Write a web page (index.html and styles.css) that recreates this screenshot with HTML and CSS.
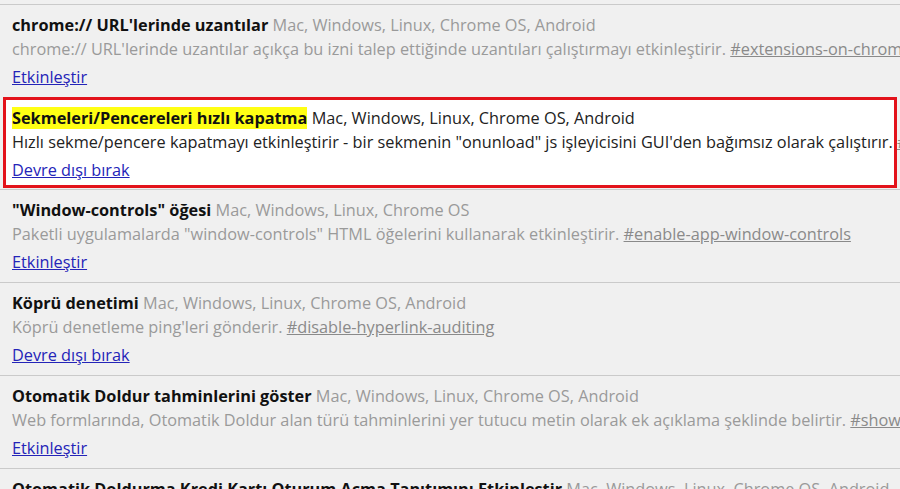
FILE: index.html
```html
<!DOCTYPE html>
<html lang="tr">
<head>
<meta charset="utf-8">
<link rel="stylesheet" href="styles.css">
</head>
<body>
<div class="list">
  <div class="item">
    <div class="line"><span class="title">chrome:// URL'lerinde uzantılar</span> <span class="platforms">Mac, Windows, Linux, Chrome OS, Android</span></div>
    <div class="line desc">chrome:// URL'lerinde uzantılar açıkça bu izni talep ettiğinde uzantıları çalıştırmayı etkinleştirir. <a class="perma" href="#">#extensions-on-chrome-urls</a></div>
    <div class="line action"><a class="link" href="#">Etkinleştir</a></div>
  </div>
  <div class="item hl">
    <div class="line"><span class="title mark">Sekmeleri/Pencereleri hızlı kapatma</span> <span class="platforms">Mac, Windows, Linux, Chrome OS, Android</span></div>
    <div class="line desc">Hızlı sekme/pencere kapatmayı etkinleştirir - bir sekmenin "onunload" js işleyicisini GUI'den bağımsız olarak çalıştırır. <a class="perma" href="#">#enable-fast-unload</a></div>
    <div class="line action"><a class="link" href="#">Devre dışı bırak</a></div>
  </div>
  <div class="item">
    <div class="line"><span class="title">"Window-controls" öğesi</span> <span class="platforms">Mac, Windows, Linux, Chrome OS</span></div>
    <div class="line desc">Paketli uygulamalarda "window-controls" HTML öğelerini kullanarak etkinleştirir. <a class="perma" href="#">#enable-app-window-controls</a></div>
    <div class="line action"><a class="link" href="#">Etkinleştir</a></div>
  </div>
  <div class="item">
    <div class="line"><span class="title">Köprü denetimi</span> <span class="platforms">Mac, Windows, Linux, Chrome OS, Android</span></div>
    <div class="line desc">Köprü denetleme ping'leri gönderir. <a class="perma" href="#">#disable-hyperlink-auditing</a></div>
    <div class="line action"><a class="link" href="#">Devre dışı bırak</a></div>
  </div>
  <div class="item">
    <div class="line"><span class="title">Otomatik Doldur tahminlerini göster</span> <span class="platforms">Mac, Windows, Linux, Chrome OS, Android</span></div>
    <div class="line desc">Web formlarında, Otomatik Doldur alan türü tahminlerini yer tutucu metin olarak ek açıklama şeklinde belirtir. <a class="perma" href="#">#show-autofill-type-predictions</a></div>
    <div class="line action"><a class="link" href="#">Etkinleştir</a></div>
  </div>
  <div class="item">
    <div class="line"><span class="title">Otomatik Doldurma Kredi Kartı Oturum Açma Tanıtımını Etkinleştir</span> <span class="platforms">Mac, Windows, Linux, Chrome OS, Android</span></div>
    <div class="line desc">Otomatik Doldurma Kredi Kartı Oturum Açma Tanıtımını etkinleştirir.</div>
    <div class="line action"><a class="link" href="#">Etkinleştir</a></div>
  </div>
</div>
</body>
</html>
```

FILE: styles.css
```css
html, body {
  margin: 0;
  padding: 0;
  background: #f0f0f0;
  overflow: hidden;
}

body {
  font-family: "Open Sans", "Noto Sans", "DejaVu Sans", sans-serif;
  font-size: 16.3px;
  color: #999;
}

.list {
  padding-top: 4px;
  width: 900px;
  overflow: hidden;
}

.item {
  border-top: 1px solid #cacaca;
  padding: 8px 12px 8px;
  white-space: nowrap;
}

.line {
  height: 24px;
  line-height: 24px;
}

.action {
  margin-top: 4px;
}

.title {
  font-weight: 700;
  color: #111;
}

.platforms {
  color: #9a9a9a;
}

.desc {
  color: #9a9a9a;
}

.perma {
  color: #8a8a8a;
  text-decoration: underline;
}

.link {
  color: #2424b8;
  text-decoration: underline;
}

.item.hl {
  margin: 0 3px 1px;
  border: 3px solid #e3131b;
  background: #fff;
  padding: 6px 6px 3px;
}

.item.hl .platforms,
.item.hl .desc {
  color: #222;
}

.mark {
  background: #ffff14;
}
```
